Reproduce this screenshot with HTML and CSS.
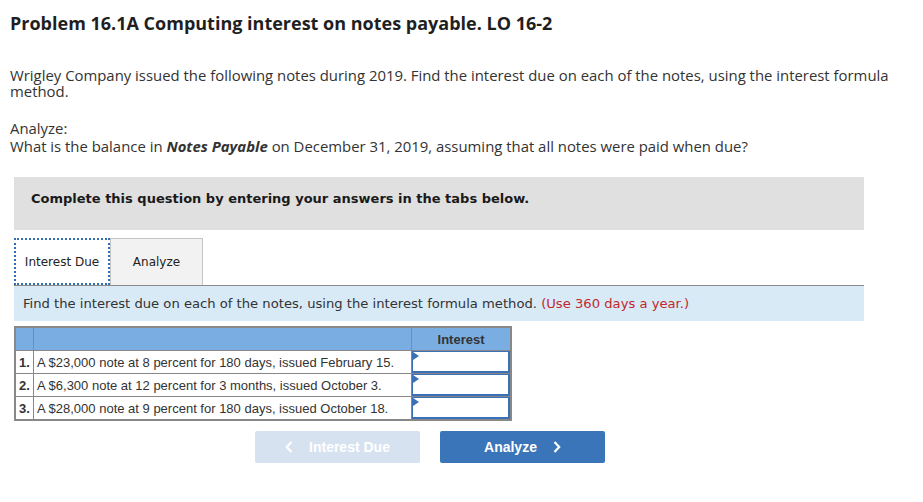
FILE: index.html
```html
<!DOCTYPE html>
<html>
<head>
<meta charset="utf-8">
<link rel="stylesheet" href="styles.css">
</head>
<body>
<div class="page">
  <h1 class="title">Problem 16.1A Computing interest on notes payable. LO 16-2</h1>
  <p class="para">Wrigley Company issued the following notes during 2019. Find the interest due on each of the notes, using the interest formula method.</p>
  <div class="analyze">
    <div class="line">Analyze:</div>
    <div class="line">What is the balance in <b><i>Notes Payable</i></b> on December 31, 2019, assuming that all notes were paid when due?</div>
  </div>

  <div class="question">
    <div class="banner">Complete this question by entering your answers in the tabs below.</div>
    <div class="tabs">
      <div class="tab tab-active">Interest Due</div>
      <div class="tab tab-inactive">Analyze</div>
    </div>
    <div class="instructions">Find the interest due on each of the notes, using the interest formula method. <span class="note">(Use 360 days a year.)</span></div>

    <table class="grid">
      <tr class="head">
        <th class="c-num"></th>
        <th class="c-desc"></th>
        <th class="c-int">Interest</th>
      </tr>
      <tr>
        <td class="c-num">1.</td>
        <td class="c-desc">A $23,000 note at 8 percent for 180 days, issued February 15.</td>
        <td class="c-int"><div class="input"><span class="flag"></span></div></td>
      </tr>
      <tr>
        <td class="c-num">2.</td>
        <td class="c-desc">A $6,300 note at 12 percent for 3 months, issued October 3.</td>
        <td class="c-int"><div class="input"><span class="flag"></span></div></td>
      </tr>
      <tr>
        <td class="c-num">3.</td>
        <td class="c-desc">A $28,000 note at 9 percent for 180 days, issued October 18.</td>
        <td class="c-int"><div class="input"><span class="flag"></span></div></td>
      </tr>
    </table>

    <div class="nav">
      <div class="btn btn-prev"><svg class="chev chev-l" width="8" height="12" viewBox="0 0 8 12"><polyline points="6.5,1 1.8,6 6.5,11" fill="none" stroke="#fff" stroke-width="2.2"/></svg>Interest Due</div>
      <div class="btn btn-next">Analyze<svg class="chev chev-r" width="8" height="12" viewBox="0 0 8 12"><polyline points="1.5,1 6.2,6 1.5,11" fill="none" stroke="#fff" stroke-width="2.2"/></svg></div>
    </div>
  </div>
</div>
</body>
</html>
```

FILE: styles.css
```css
html, body {
  margin: 0;
  padding: 0;
  background: #fff;
}
.page {
  padding: 0 10px;
  color: #333;
  font-family: "Open Sans", "Lato", sans-serif;
}
.title {
  margin: 11px 0 0;
  font-size: 18px;
  font-weight: 700;
  color: #1f1f1f;
  line-height: 24px;
}
.para {
  margin: 32px 0 0;
  font-size: 14.9px;
  line-height: 16px;
  color: #333;
}
.analyze {
  margin-top: 20px;
  font-size: 14.9px;
  line-height: 18px;
  color: #333;
}
.question {
  margin: 22px 49px 0 4px;
}
.banner {
  background: #e0e0e0;
  height: 53px;
  box-sizing: border-box;
  padding: 13px 17px;
  font-family: "DejaVu Sans", Verdana, sans-serif;
  font-weight: 700;
  font-size: 13px;
  line-height: 18px;
  color: #1a1a1a;
}
.tabs {
  display: flex;
  margin-top: 8px;
  height: 47px;
}
.tab {
  box-sizing: border-box;
  height: 47px;
  display: flex;
  align-items: center;
  justify-content: center;
  font-family: "DejaVu Sans", Verdana, sans-serif;
  font-size: 12px;
  color: #222;
}
.tab-active {
  width: 96px;
  background: #fff;
  border: 2px dotted #2f6db5;
}
.tab-inactive {
  width: 93px;
  background: #f2f2f2;
  border: 1px solid #c4c4c4;
  border-bottom: none;
}
.instructions {
  background: #d9eaf7;
  border-top: 1px solid #8a8a8a;
  height: 36px;
  box-sizing: border-box;
  padding: 0 9px;
  display: flex;
  align-items: center;
  font-family: "DejaVu Sans", Verdana, sans-serif;
  font-size: 13.15px;
  color: #333;
  white-space: pre;
}
.note {
  color: #c1272d;
}
.grid {
  margin-top: 5px;
  border-collapse: collapse;
  border: 2px solid #888;
  font-family: "Liberation Sans", Arial, sans-serif;
  font-size: 13px;
  color: #333;
}
.grid th, .grid td {
  border: 1px solid #888;
  padding: 0;
  height: 22px;
}
.head th {
  background: #7aaee3;
  font-weight: 700;
  color: #333;
  font-size: 13px;
}
.c-num {
  width: 17px;
  font-weight: 700;
  text-align: center;
}
.c-desc {
  width: 374px;
  padding-left: 3px !important;
  text-align: left;
}
.c-int {
  width: 98px;
  text-align: center;
}
td.c-int {
  padding: 0 !important;
}
.input {
  position: relative;
  border: 2px solid #3a70b7;
  border-width: 1px 2px 2px 1px;
  box-sizing: border-box;
  height: 22px;
  background: #fff;
}
.flag {
  position: absolute;
  left: 0;
  top: 0;
  width: 0;
  height: 0;
  border-top: 4px solid transparent;
  border-bottom: 4px solid transparent;
  border-left: 6px solid #3a70b7;
}
.nav {
  display: flex;
  margin: 10px 0 0 241px;
  gap: 20px;
}
.btn {
  width: 165px;
  height: 32px;
  border-radius: 2px;
  display: flex;
  align-items: center;
  justify-content: center;
  font-family: "Liberation Sans", Arial, sans-serif;
  font-weight: 700;
  font-size: 14px;
  color: #fff;
}
.btn-prev {
  background: #d6e2f0;
}
.btn-next {
  background: #3a75b9;
}
.chev-l {
  margin-right: 16px;
}
.chev-r {
  margin-left: 16px;
}
```
